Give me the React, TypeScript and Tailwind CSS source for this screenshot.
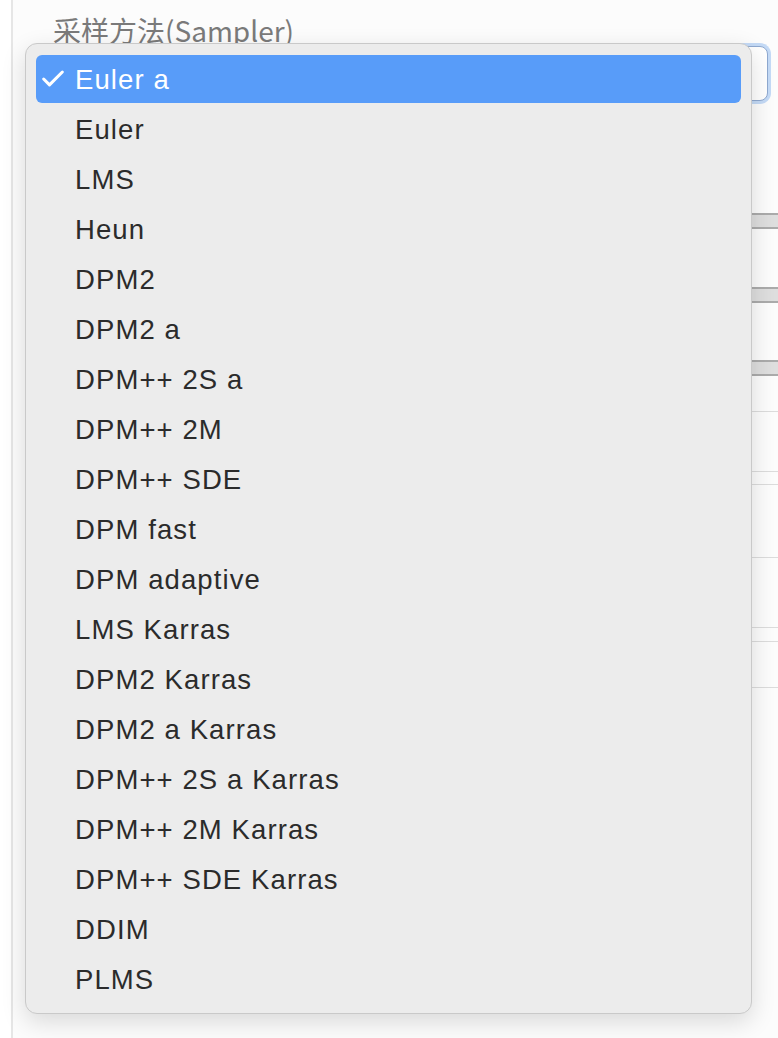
import { Check } from "lucide-react";

const SAMPLERS = [
  "Euler a",
  "Euler",
  "LMS",
  "Heun",
  "DPM2",
  "DPM2 a",
  "DPM++ 2S a",
  "DPM++ 2M",
  "DPM++ SDE",
  "DPM fast",
  "DPM adaptive",
  "LMS Karras",
  "DPM2 Karras",
  "DPM2 a Karras",
  "DPM++ 2S a Karras",
  "DPM++ 2M Karras",
  "DPM++ SDE Karras",
  "DDIM",
  "PLMS",
];

const FONT = { fontFamily: '"Liberation Sans", Arial, sans-serif' };

function SliderTrack() {
  return <div className="h-[16px] border-y-2 border-[#ababab] bg-[#dedede]" />;
}

// Settings panel that sits behind the open dropdown
function Background() {
  return (
    <div className="ml-[11px] h-full border-l-2 border-[#e6e6e6] bg-[#fcfcfc]">
      <div
        className="pl-[40px] pt-[14px] text-[28px] leading-[32px] text-[#7a7a7a]"
        style={{ fontFamily: '"Noto Sans CJK SC", "Noto Sans", sans-serif' }}
      >
        采样方法(Sampler)
      </div>
      <div className="mr-[10px] ml-[28px] h-[55px] rounded-[8px] border border-[#8fa9d0] bg-white ring-[3px] ring-[#c4daf6]" />
      <div className="ml-[100px] mt-[112px]">
        <SliderTrack />
      </div>
      <div className="ml-[100px] mt-[58px]">
        <SliderTrack />
      </div>
      <div className="ml-[100px] mt-[57px]">
        <SliderTrack />
      </div>
      <div className="ml-[100px] mt-[35px] h-[61px] border-y border-[#dcdcdc]" />
      <div className="ml-[100px] mt-[12px] h-[74px] border-y border-[#dcdcdc]" />
      <div className="ml-[100px] mt-[69px] h-[15px] border-y border-[#dcdcdc]" />
      <div className="ml-[100px] mt-[45px] border-t border-[#dcdcdc]" />
    </div>
  );
}

function SamplerMenu({ selected }: { selected: string }) {
  return (
    <div
      className="absolute left-[25px] top-[43px] w-[727px] rounded-[12px] border border-[#c9c9c9] bg-[#ececec] px-[10px] pt-[10px] pb-[9px] shadow-[0_8px_24px_rgba(0,0,0,0.14)]"
      style={FONT}
    >
      {SAMPLERS.map((name) => {
        const active = name === selected;
        return (
          <div key={name} className="flex h-[50px] items-center py-[1px]">
            <div
              className={
                active
                  ? "flex h-full w-full items-center rounded-[6px] bg-[#589cf9] text-white"
                  : "flex h-full w-full items-center text-[#2b2b2b]"
              }
            >
              <span className="flex w-[39px] justify-start pl-[3px]">
                {active && <Check size={28} strokeWidth={2.6} />}
              </span>
              <span className="pt-[2px] text-[27.5px] leading-none tracking-[1.1px]">{name}</span>
            </div>
          </div>
        );
      })}
    </div>
  );
}

export default function App() {
  return (
    <div className="relative h-[1038px] w-[778px] overflow-hidden bg-white">
      <Background />
      <SamplerMenu selected="Euler a" />
    </div>
  );
}
